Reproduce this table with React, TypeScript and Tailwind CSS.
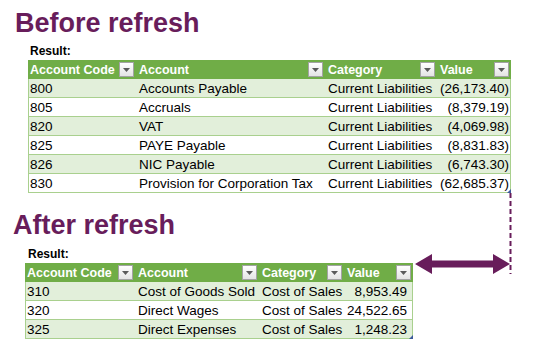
type Row = { code: string; account: string; category: string; value: number };

const before: Row[] = [
  { code: "800", account: "Accounts Payable", category: "Current Liabilities", value: -26173.4 },
  { code: "805", account: "Accruals", category: "Current Liabilities", value: -8379.19 },
  { code: "820", account: "VAT", category: "Current Liabilities", value: -4069.98 },
  { code: "825", account: "PAYE Payable", category: "Current Liabilities", value: -8831.83 },
  { code: "826", account: "NIC Payable", category: "Current Liabilities", value: -6743.3 },
  { code: "830", account: "Provision for Corporation Tax", category: "Current Liabilities", value: -62685.37 },
];

const after: Row[] = [
  { code: "310", account: "Cost of Goods Sold", category: "Cost of Sales", value: 8953.49 },
  { code: "320", account: "Direct Wages", category: "Cost of Sales", value: 24522.65 },
  { code: "325", account: "Direct Expenses", category: "Cost of Sales", value: 1248.23 },
];

function fmt(v: number) {
  const s = Math.abs(v).toLocaleString("en-US", { minimumFractionDigits: 2, maximumFractionDigits: 2 });
  return v < 0 ? `(${s})` : s;
}

function FilterButton() {
  return (
    <div className="w-[15px] h-[15px] mr-[2px] shrink-0 border border-[#a3a3a3] bg-gradient-to-b from-white to-[#e4e4e4] flex items-center justify-center">
      <svg width="7" height="4" viewBox="0 0 7 4">
        <path d="M0 0 L7 0 L3.5 4 Z" fill="#5a5a5a" />
      </svg>
    </div>
  );
}

function HeaderCell({ label, width, pl }: { label: string; width: number; pl: string }) {
  return (
    <div className={`flex items-center justify-between ${pl}`} style={{ width }}>
      <span className="text-[12.5px] font-bold text-white leading-[19px] pt-px whitespace-nowrap">{label}</span>
      <FilterButton />
    </div>
  );
}

function ResultTable({ rows, widths }: { rows: Row[]; widths: number[] }) {
  const labels = ["Account Code", "Account", "Category", "Value"];
  return (
    <div className="relative w-fit">
      <div className="flex h-[19px] bg-[#70ad47]">
        {labels.map((l, i) => (
          <HeaderCell key={l} label={l} width={widths[i]} pl={i === 0 ? "pl-[2px]" : "pl-[3px]"} />
        ))}
      </div>
      {rows.map((r, i) => (
        <div
          key={r.code}
          className={`flex h-[19px] border-b border-x border-[#a9d08e] text-[13.5px] leading-[18px] text-black whitespace-nowrap ${
            i % 2 === 0 ? "bg-[#e2efda]" : "bg-white"
          }`}
        >
          <div className="pl-px pt-px" style={{ width: widths[0] - 1 }}>{r.code}</div>
          <div className="pl-[3px] pt-px" style={{ width: widths[1] }}>{r.account}</div>
          <div className="pl-[3px] pt-px" style={{ width: widths[2] }}>{r.category}</div>
          <div className={`pt-px text-right ${r.value < 0 ? "pr-px" : "pr-[5px]"}`} style={{ width: widths[3] - 1 }}>
            {fmt(r.value)}
          </div>
        </div>
      ))}
      <svg className="absolute right-0 bottom-0" width="4" height="4" viewBox="0 0 4 4">
        <path d="M4 0 L4 4 L0 4 Z" fill="#3c5a9a" />
      </svg>
    </div>
  );
}

export default function App() {
  return (
    <div className="relative w-[533px] h-[356px] bg-white overflow-hidden font-['Liberation_Sans',Arial,sans-serif]">
      {/* Before */}
      <div className="pt-[10px] pl-[15px] text-[27px] leading-[27px] font-bold text-[#681d5b]">Before refresh</div>
      <div className="mt-[7px] pl-[30px] text-[12px] leading-[14px] font-bold text-black">Result:</div>
      <div className="mt-[2px] ml-[28px]">
        <ResultTable rows={before} widths={[108, 189, 112, 74]} />
      </div>

      {/* After */}
      <div className="mt-[19px] pl-[13px] text-[27px] leading-[27px] font-bold text-[#681d5b]">After refresh</div>
      <div className="mt-[8px] pl-[28px] text-[12px] leading-[14px] font-bold text-black">Result:</div>
      <div className="mt-[2px] ml-[25px]">
        <ResultTable rows={after} widths={[110, 124, 85, 69]} />
      </div>

      {/* width change marker */}
      <svg className="absolute left-0 top-0 pointer-events-none" width="533" height="356" viewBox="0 0 533 356">
        <line x1="510.5" y1="193" x2="510.5" y2="274" stroke="#681d5b" strokeWidth="2" strokeDasharray="5 3" />
        <path
          d="M415 264 L432 254 L432 260.5 L493 260.5 L493 254 L510 264 L493 274 L493 267.5 L432 267.5 L432 274 Z"
          fill="#681d5b"
        />
      </svg>
    </div>
  );
}
